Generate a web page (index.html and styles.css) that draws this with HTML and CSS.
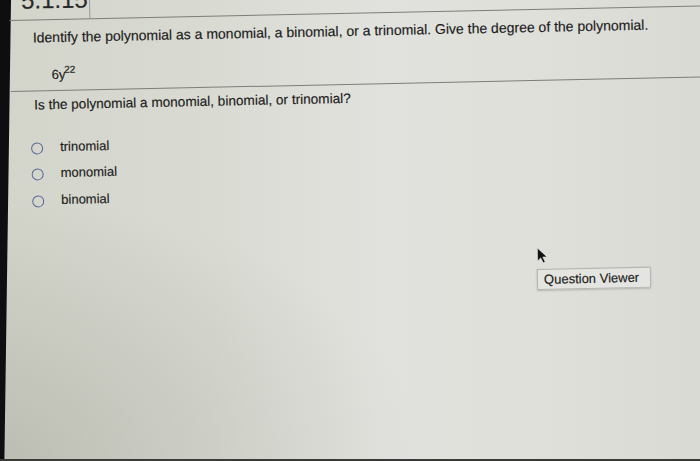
FILE: index.html
```html
<!DOCTYPE html>
<html>
<head>
<meta charset="utf-8">
<link rel="stylesheet" href="styles.css">
</head>
<body>
<div class="screen">
  <div class="bezel"></div>
  <div class="page">
    <header class="top">
      <div class="qnum">5.1.15</div>
    </header>
    <div class="prompt">Identify the polynomial as a monomial, a binomial, or a trinomial. Give the degree of the polynomial.</div>
    <div class="expr">6y<sup>22</sup></div>
    <div class="question">Is the polynomial a monomial, binomial, or trinomial?</div>
    <ul class="choices">
      <li class="choice"><span class="radio"></span><span class="label">trinomial</span></li>
      <li class="choice"><span class="radio"></span><span class="label">monomial</span></li>
      <li class="choice"><span class="radio"></span><span class="label">binomial</span></li>
    </ul>
    <svg class="cursor" width="12" height="17" viewBox="0 0 12 17">
      <path d="M1 1 L1 14 L4.2 11 L6.6 16 L8.6 15 L6.3 10.2 L10.6 10.2 Z" fill="#111" stroke="#ddd" stroke-width="0.7" stroke-linejoin="round"/>
    </svg>
    <div class="tooltip">Question Viewer</div>
  </div>
</div>
</body>
</html>
```
FILE: styles.css
```css
html, body {
  margin: 0;
  padding: 0;
  width: 700px;
  height: 461px;
  overflow: hidden;
}
body {
  font-family: "Liberation Sans", Arial, sans-serif;
  color: #1b1b1b;
  -webkit-text-stroke: 0.15px #1b1b1b;
}
.screen {
  display: flex;
  width: 700px;
  height: 461px;
  background:
    radial-gradient(ellipse 420px 260px at 0% 100%, rgba(120,122,110,0.25), rgba(120,122,110,0) 100%),
    linear-gradient(90deg, #d3d4ca 0%, #d9dad2 30%, #e1e2dd 55%, #dfe0da 75%, #d9dad3 100%);
  border-bottom: 2px solid #3a3a38;
  box-sizing: border-box;
}
.bezel {
  width: 11px;
  flex: none;
  background: #0e0e10;
  clip-path: polygon(0 0, 100% 0, 40% 100%, 0 100%);
}
.page {
  flex: 1;
  position: relative;
  margin-left: -2px;
  transform: rotate(-1.2deg);
  transform-origin: 0 0;
}
.top {
  height: 20px;
  border-bottom: 1px solid #7d7e79;
  margin-right: -20px;
}
.qnum {
  width: 81px;
  height: 20px;
  box-sizing: border-box;
  border-right: 1px solid #9a9b96;
  font-size: 24px;
  line-height: 14px;
  color: #2a2a2a;
  padding-left: 12px;
  overflow: hidden;
}
.qnum::before {
  content: "";
  display: block;
  margin-top: -6px;
}
.prompt {
  font-size: 14px;
  line-height: 16px;
  padding: 9px 0 0 23px;
  white-space: nowrap;
}
.expr {
  font-size: 13px;
  line-height: 16px;
  padding: 22px 0 7px 41px;
  border-bottom: 1px solid #7d7e79;
  margin-right: -20px;
}
.expr sup {
  font-size: 10px;
  line-height: 0;
  vertical-align: 6px;
  margin-left: -1px;
}
.question {
  font-size: 13.6px;
  line-height: 16px;
  padding: 6px 0 0 23px;
}
.choices {
  list-style: none;
  margin: 20px 0 0;
  padding: 0 0 0 19px;
}
.choice {
  display: flex;
  align-items: center;
  height: 26.5px;
  font-size: 13px;
}
.radio {
  width: 12px;
  height: 12px;
  box-sizing: border-box;
  border: 1.6px solid #56679a;
  border-radius: 50%;
  margin-top: 3px;
  flex: none;
}
.label {
  margin-left: 17px;
}
.cursor {
  position: absolute;
  left: 522px;
  top: 258px;
}
.tooltip {
  position: absolute;
  left: 522px;
  top: 280px;
  width: 114px;
  height: 21px;
  box-sizing: border-box;
  border: 1px solid #b4b5b0;
  background: #e4e5e0;
  box-shadow: 0 1px 2px rgba(0,0,0,0.2);
  font-size: 13px;
  line-height: 19px;
  padding-left: 6px;
  color: #222;
}
```
